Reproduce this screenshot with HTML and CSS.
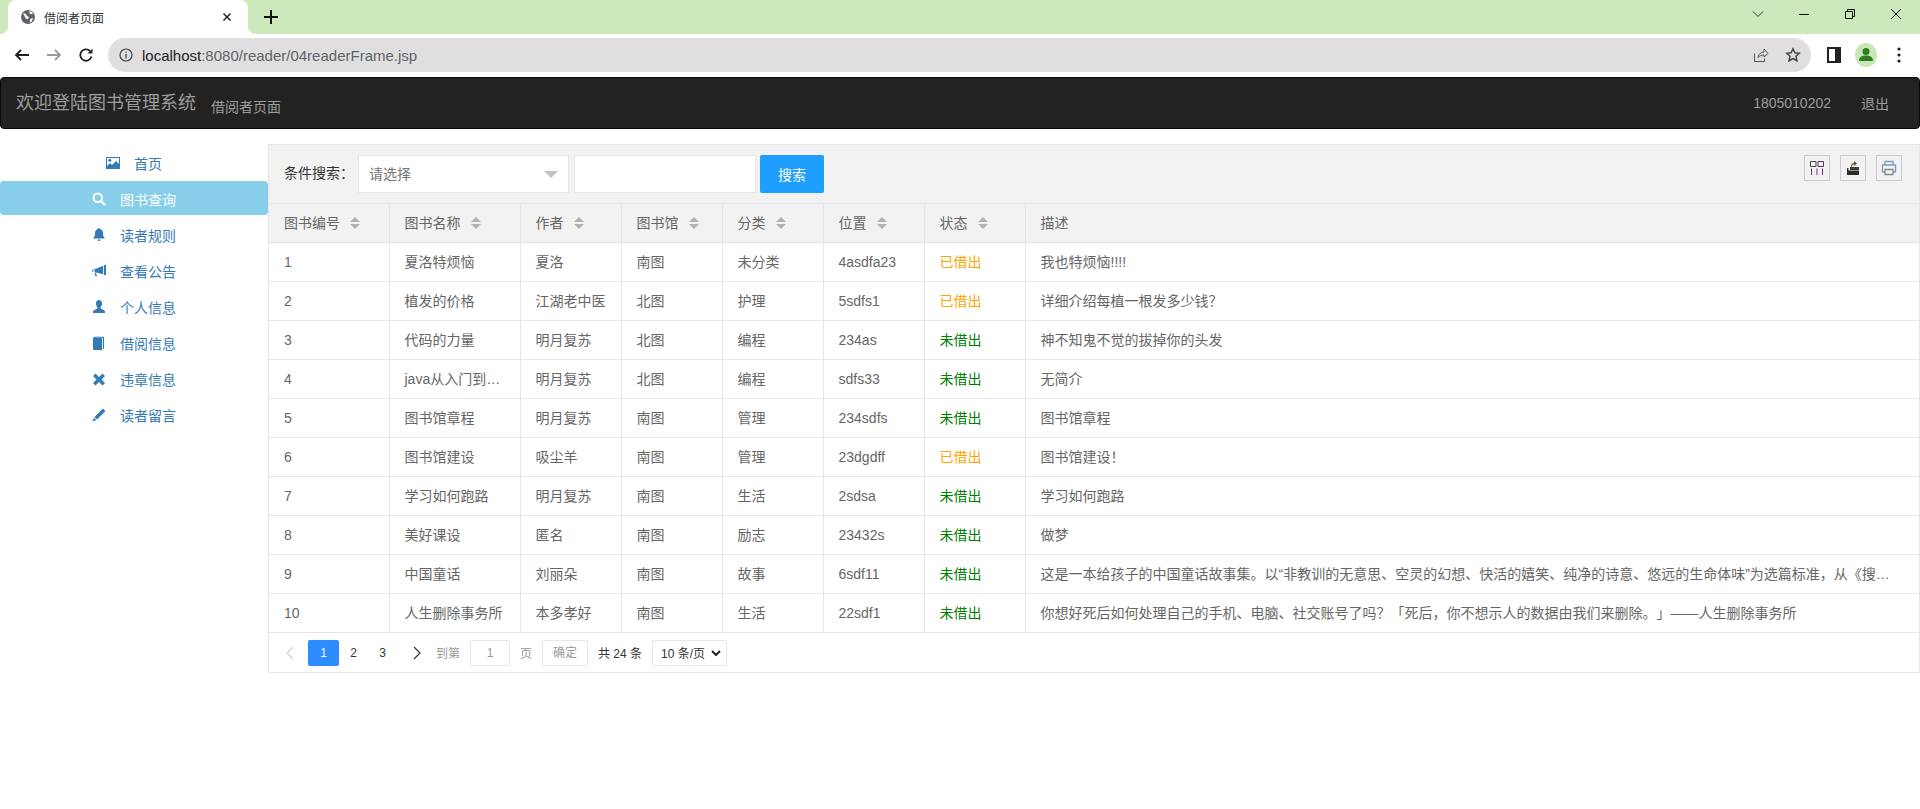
FILE: index.html
```html
<!DOCTYPE html>
<html lang="zh">
<head>
<meta charset="utf-8">
<title>借阅者页面</title>
<link rel="stylesheet" href="styles.css">
</head>
<body>
<div class="tabstrip">
  <div class="tab">
    <svg class="favicon" viewBox="0 0 16 16"><circle cx="8" cy="8" r="7" fill="#5f6368"/><path d="M3 4l3 1 1 2 2 1-1 2-2 0-1-2zM9 2l3 1 1 2-3 0zM10 10l3-1-1 3-2 2z" fill="#fff"/></svg>
    <span class="tab-title">借阅者页面</span>
    <svg class="tab-close" viewBox="0 0 10 10"><path d="M1.500 1.500l7 7M8.500 1.500l-7 7" stroke="#222" stroke-width="1.500"/></svg>
  </div>
  <svg class="newtab" viewBox="0 0 12 12"><path d="M6 0v12M0 6h12" stroke="#111" stroke-width="1.700"/></svg>
  <div class="winctl">
    <svg viewBox="0 0 12 12"><path d="M1 3.500l5 5 5-5" fill="none" stroke="#333"/></svg>
    <svg viewBox="0 0 12 12"><path d="M1 6.500h10" stroke="#111"/></svg>
    <svg viewBox="0 0 12 12"><path d="M1.500 3.500h7v7h-7zM3.500 3.500v-2h7v7h-2" fill="none" stroke="#111"/></svg>
    <svg viewBox="0 0 12 12"><path d="M1 1l10 10M11 1L1 11" stroke="#111"/></svg>
  </div>
</div>
<div class="toolbar">
  <svg class="tb-ico" viewBox="0 0 16 16"><path d="M15 8H2M7 3L2 8l5 5" fill="none" stroke="#222" stroke-width="1.800"/></svg>
  <svg class="tb-ico" viewBox="0 0 16 16"><path d="M1 8h13M9 3l5 5-5 5" fill="none" stroke="#9a9a9a" stroke-width="1.800"/></svg>
  <svg class="tb-ico" viewBox="0 0 16 16"><path d="M13.500 9.500A5.700 5.700 0 1 1 12 4" fill="none" stroke="#222" stroke-width="1.800"/><path d="M14.500 1.500v5h-5z" fill="#222"/></svg>
  <div class="omnibox">
    <svg class="info" viewBox="0 0 14 14"><circle cx="7" cy="7" r="6" fill="none" stroke="#444" stroke-width="1.200"/><path d="M7 6v4.500M7 3.500v1.300" stroke="#444" stroke-width="1.300"/></svg>
    <span class="url"><b>localhost</b>:8080/reader/04readerFrame.jsp</span>
    <svg class="omni-ico" viewBox="0 0 16 16"><path d="M1.500 6.500v8h10v-3M5 10.500C5.500 7 8 5 11 5V2l4 4.500L11 10V8C8.500 8 6.500 9 5 10.500z" fill="none" stroke="#555" stroke-width="1"/></svg>
    <svg class="omni-ico" viewBox="0 0 16 16"><path d="M8 1.800l1.900 4 4.300.5-3.200 3 .9 4.400L8 11.500l-3.900 2.200.9-4.400-3.200-3 4.300-.5z" fill="none" stroke="#444" stroke-width="1.500"/></svg>
  </div>
  <div class="tb-right">
    <svg class="panel" viewBox="0 0 14 16"><path d="M0 0h14v16H0z" fill="#222"/><path d="M2 2h6v12H2z" fill="#fff"/></svg>
    <span class="avatar"><svg viewBox="0 0 22 24"><circle cx="11" cy="8.500" r="3.500" fill="#2f7d1f"/><path d="M4 18c0-4 3-5.500 7-5.500s7 1.500 7 5.500z" fill="#2f7d1f"/></svg></span>
    <svg class="menu" viewBox="0 0 4 16"><circle cx="2" cy="2" r="1.600" fill="#222"/><circle cx="2" cy="8" r="1.600" fill="#222"/><circle cx="2" cy="14" r="1.600" fill="#222"/></svg>
  </div>
</div>
<nav class="navbar">
  <span class="brand">欢迎登陆图书管理系统</span>
  <span class="subtitle">借阅者页面</span>
  <span class="nav-user">1805010202</span>
  <span class="nav-exit">退出</span>
</nav>
<div class="main">
  <ul class="side">
    <li class="side-first"><svg viewBox="0 0 14 14"><path fill-rule="evenodd" d="M0 1h14v12H0zM1 2v8l3-3 2 2 4-4 3 3V2z"/><circle cx="3.800" cy="4.300" r="1.500"/></svg><span>首页</span></li>
    <li class="active"><svg viewBox="0 0 14 14"><circle cx="5.800" cy="5.800" r="4.300" fill="none" stroke="currentColor" stroke-width="2"/><path d="M9 9l4 4" stroke="currentColor" stroke-width="2.400"/></svg><span>图书查询</span></li>
    <li><svg viewBox="0 0 14 14"><path d="M7 0a1 1 0 0 1 1 1c2.500.5 3 2.500 3 4.500 0 3 1 4 2.200 5H.8C2 9.500 3 8.500 3 5.500 3 3.500 3.500 1.500 6 1a1 1 0 0 1 1-1zM5.500 11.500h3a1.500 1.500 0 0 1-3 0z"/></svg><span>读者规则</span></li>
    <li><svg viewBox="0 0 14 14"><path d="M12 1h2v10h-2zM11.200 1.800v8.400L4 8.500H2.500v-3.700H4zM1.300 5.300v2.600H.4V5.300zM4 9l1 3.200H3.400L2.700 9z"/></svg><span>查看公告</span></li>
    <li><svg viewBox="0 0 14 14"><path d="M7 0c2 0 3 1.500 3 3.500 0 1.700-.7 3-1.500 4 0 1 .5 1.200 2 2 1.500.7 2.500 1 2.500 2.300V13H1v-1.200c0-1.300 1-1.600 2.500-2.300 1.500-.8 2-1 2-2-.8-1-1.500-2.300-1.500-4C4 1.500 5 0 7 0z"/></svg><span>个人信息</span></li>
    <li><svg viewBox="0 0 14 14"><path d="M1 2.500C1 1.500 1.800.8 3 .8h9v12H11V1.800H3.500v.3H10.200v12H2.500c-1 0-1.500-.6-1.500-1.500z"/></svg><span>借阅信息</span></li>
    <li><svg viewBox="0 0 14 14"><path d="M3.500 1.500L7 5l3.500-3.500 2.500 2.500L9.500 7.500l3.500 3.500-2.500 2.500L7 10l-3.500 3.500L1 11l3.500-3.500L1 4z"/></svg><span>违章信息</span></li>
    <li><svg viewBox="0 0 14 14"><path d="M11 .5l2.500 2.500-8.500 8.500-2.500-2.500zM2 9.800l2.300 2.300L.5 13.500z"/></svg><span>读者留言</span></li>
  </ul>
  <section class="panel-box">
    <div class="search">
      <label class="search-label">条件搜索：</label>
      <div class="fake-select">请选择<i class="caret"></i></div>
      <input class="search-input" type="text">
      <button class="search-btn">搜索</button>
      <div class="tools">
        <span class="tool"><svg viewBox="0 0 16 16"><path d="M1.500 1.500h5.500v5h-5.500zM9 1.500h5.500v5H9z" fill="none" stroke="#4d3a4f"/><path d="M2.500 8.500v6.500M8 8.500v6.500M13.500 8.500v6.500" stroke="#7a2a88" stroke-width="1"/></svg></span>
        <span class="tool"><svg viewBox="0 0 16 16"><path d="M2 8h1.500v2.500H14V15H2z" fill="#2a2a2a"/><path d="M5 7h9v3H5z" fill="#3a3a3a"/><path d="M9 1l3 2.500-3 2.500z" fill="#2f4f6f"/><path d="M6.500 7c0-2 1-3.500 3-3.500" fill="none" stroke="#b5651d" stroke-width="1.300"/></svg></span>
        <span class="tool"><svg viewBox="0 0 16 16"><path d="M4 5V1.500h8V5M4 12H1.500V5h13v7H12" fill="none" stroke="#7f9cc4" stroke-width="1.300"/><path d="M4 9.500h8v5H4z" fill="none" stroke="#888" stroke-width="1.300"/></svg></span>
      </div>
    </div>
    <table class="grid">
      <colgroup><col class="c1"><col class="c2"><col class="c3"><col class="c3"><col class="c3"><col class="c3"><col class="c3"><col></colgroup>
      <thead>
        <tr>
          <th><span class="th">图书编号<i class="sort"></i></span></th>
          <th><span class="th">图书名称<i class="sort"></i></span></th>
          <th><span class="th">作者<i class="sort"></i></span></th>
          <th><span class="th">图书馆<i class="sort"></i></span></th>
          <th><span class="th">分类<i class="sort"></i></span></th>
          <th><span class="th">位置<i class="sort"></i></span></th>
          <th><span class="th">状态<i class="sort"></i></span></th>
          <th>描述</th>
        </tr>
      </thead>
      <tbody>
        <tr><td>1</td><td>夏洛特烦恼</td><td>夏洛</td><td>南图</td><td>未分类</td><td>4asdfa23</td><td class="out">已借出</td><td>我也特烦恼!!!!</td></tr>
        <tr><td>2</td><td>植发的价格</td><td>江湖老中医</td><td>北图</td><td>护理</td><td>5sdfs1</td><td class="out">已借出</td><td>详细介绍每植一根发多少钱？</td></tr>
        <tr><td>3</td><td>代码的力量</td><td>明月复苏</td><td>北图</td><td>编程</td><td>234as</td><td class="in">未借出</td><td>神不知鬼不觉的拔掉你的头发</td></tr>
        <tr><td>4</td><td>java从入门到…</td><td>明月复苏</td><td>北图</td><td>编程</td><td>sdfs33</td><td class="in">未借出</td><td>无简介</td></tr>
        <tr><td>5</td><td>图书馆章程</td><td>明月复苏</td><td>南图</td><td>管理</td><td>234sdfs</td><td class="in">未借出</td><td>图书馆章程</td></tr>
        <tr><td>6</td><td>图书馆建设</td><td>吸尘羊</td><td>南图</td><td>管理</td><td>23dgdff</td><td class="out">已借出</td><td>图书馆建设！</td></tr>
        <tr><td>7</td><td>学习如何跑路</td><td>明月复苏</td><td>南图</td><td>生活</td><td>2sdsa</td><td class="in">未借出</td><td>学习如何跑路</td></tr>
        <tr><td>8</td><td>美好课设</td><td>匿名</td><td>南图</td><td>励志</td><td>23432s</td><td class="in">未借出</td><td>做梦</td></tr>
        <tr><td>9</td><td>中国童话</td><td>刘丽朵</td><td>南图</td><td>故事</td><td>6sdf11</td><td class="in">未借出</td><td>这是一本给孩子的中国童话故事集。以“非教训的无意思、空灵的幻想、快活的嬉笑、纯净的诗意、悠远的生命体味”为选篇标准，从《搜…</td></tr>
        <tr><td>10</td><td>人生删除事务所</td><td>本多孝好</td><td>南图</td><td>生活</td><td>22sdf1</td><td class="in">未借出</td><td>你想好死后如何处理自己的手机、电脑、社交账号了吗？「死后，你不想示人的数据由我们来删除。」——人生删除事务所</td></tr>
      </tbody>
    </table>
    <div class="pager">
      <svg class="chev prev" viewBox="0 0 8 14"><path d="M7 1L1 7l6 6" fill="none" stroke="#d2d2d2" stroke-width="1.200"/></svg>
      <span class="pg cur">1</span>
      <span class="pg">2</span>
      <span class="pg">3</span>
      <svg class="chev next" viewBox="0 0 8 14"><path d="M1 1l6 6-6 6" fill="none" stroke="#333" stroke-width="1.200"/></svg>
      <span class="muted goto">到第</span>
      <span class="pg-input">1</span>
      <span class="muted page-word">页</span>
      <span class="pg-ok">确定</span>
      <span class="total">共 24 条</span>
      <span class="pg-size">10 条/页<svg viewBox="0 0 10 6"><path d="M1 1l4 4 4-4" fill="none" stroke="#222" stroke-width="2"/></svg></span>
    </div>
  </section>
</div>
</body>
</html>
```
FILE: styles.css
```css
* { box-sizing: border-box; }
html, body { margin: 0; padding: 0; height: 100%; overflow: hidden; }
body { background: #fff; font-family: "Liberation Sans", "Noto Sans CJK SC", sans-serif; font-size: 14px; color: #666; text-spacing-trim: space-all; }

.tabstrip { height: 34px; background: #cce9be; display: flex; align-items: flex-end; }
.tab { width: 240px; height: 34px; margin-left: 8px; background: #fff; border-radius: 8px 8px 0 0; display: flex; align-items: center; padding: 0 14px 0 12px; position: relative; }
.tab::before, .tab::after { content: ""; position: absolute; bottom: 0; width: 8px; height: 8px; }
.tab::before { left: -8px; background: radial-gradient(circle at 0 0, #cce9be 8px, #fff 8.5px); }
.tab::after { right: -8px; background: radial-gradient(circle at 100% 0, #cce9be 8px, #fff 8.5px); }
.favicon { width: 16px; height: 16px; flex: none; }
.tab-title { margin-left: 8px; font-size: 12px; color: #333; flex: 1; }
.tab-close { width: 10px; height: 10px; margin-right: 2px; }
.newtab { width: 14px; height: 14px; margin: 0 0 10px 16px; }
.winctl { margin-left: auto; height: 34px; display: flex; align-items: flex-start; padding: 8px 18px 0 0; gap: 34px; }
.winctl svg { width: 12px; height: 12px; display: block; }

.toolbar { height: 43px; background: #fff; display: flex; align-items: flex-start; padding-top: 4px; }
.tb-ico { width: 16px; height: 16px; flex: none; margin: 9px 0 0 16px; }
.tb-ico:first-child { margin-left: 14px; }
.omnibox { margin-left: 14px; width: 1703px; height: 34px; background: #dfdfdf; border-radius: 17px; display: flex; align-items: center; padding: 0 10px 0 11px; flex: none; }
.info { width: 14px; height: 14px; flex: none; }
.url { margin-left: 9px; font-size: 15px; color: #5f6368; flex: 1; font-family: "Liberation Sans", sans-serif; }
.url b { font-weight: normal; color: #202124; }
.omni-ico { width: 16px; height: 16px; margin-left: 16px; }
.tb-right { flex: 1; display: flex; align-items: center; height: 34px; padding-left: 16px; }
.panel { width: 14px; height: 16px; }
.avatar { width: 22px; height: 24px; background: #c9e7b9; border-radius: 50%; margin-left: 14px; display: block; }
.avatar svg { display: block; width: 22px; height: 24px; }
.menu { width: 4px; height: 16px; margin-left: 20px; }

.navbar { height: 52px; background: #222; border: 1px solid #080808; border-radius: 4px; display: flex; align-items: center; color: #9d9d9d; padding: 0 30px 0 15px; }
.brand { font-size: 18px; line-height: 20px; }
.subtitle { font-size: 14px; margin-left: 15px; position: relative; top: 3px; }
.nav-user { margin-left: auto; }
.nav-exit { margin-left: 30px; }

.main { display: flex; align-items: flex-start; padding-top: 15px; }
.side { list-style: none; margin: 1px 0 0; padding: 0; width: 268px; flex: none; }
.side li { height: 34px; margin-bottom: 2px; padding-top: 1px; display: flex; align-items: center; justify-content: center; gap: 14px; color: #337ab7; border-radius: 4px; }
.side li svg { width: 14px; height: 14px; fill: currentColor; flex: none; }
.side li span { line-height: 20px; padding-top: 2px; }
.side li.active { background: #87ceeb; color: #fff; }

.panel-box { flex: 1; min-width: 0; border: 1px solid #e6e6e6; }
.search { height: 58px; background: #f2f2f2; display: flex; align-items: flex-start; padding: 10px 17px 0 15px; }
.search-label { color: #333; line-height: 36px; width: 74px; flex: none; }
.fake-select { width: 211px; height: 38px; background: #fff; border: 1px solid #e6e6e6; padding-left: 10px; line-height: 36px; color: #757575; position: relative; flex: none; }
.caret { position: absolute; right: 10px; top: 15px; border: 7px solid transparent; border-top-color: #c2c2c2; border-bottom: none; }
.search-input { width: 182px; height: 38px; margin-left: 5px; border: 1px solid #e6e6e6; background: #fff; flex: none; outline: none; }
.search-btn { width: 64px; height: 38px; margin-left: 4px; background: #1e9fff; color: #fff; border: none; border-radius: 2px; font: inherit; padding: 0; flex: none; }
.tools { margin-left: auto; display: flex; gap: 10px; }
.tool { width: 26px; height: 26px; border: 1px solid #ccc; display: flex; align-items: center; justify-content: center; }
.tool svg { width: 16px; height: 16px; display: block; }

.grid { width: 100%; table-layout: fixed; border-collapse: collapse; }
.c1 { width: 120px; }
.c2 { width: 131px; }
.c3 { width: 101px; }
.grid th, .grid td { height: 39px; padding: 0 15px; border: 1px solid #e6e6e6; font-weight: normal; font-size: 14px; line-height: 20px; text-align: left; white-space: nowrap; color: #666; }
.grid tr > :first-child { border-left: none; }
.grid tr > :last-child { border-right: none; }
.grid th { background: #f2f2f2; }
.th { display: inline-flex; align-items: center; }
.sort { width: 10px; height: 12px; margin-left: 10px; position: relative; display: block; flex: none; }
.sort::before, .sort::after { content: ""; position: absolute; left: 0; border: 5px solid transparent; }
.sort::before { top: 0; border-top: none; border-bottom-color: #b2b2b2; }
.sort::after { bottom: 0; border-bottom: none; border-top-color: #b2b2b2; }
.grid td.out { color: #ffa500; }
.grid td.in { color: #008000; }

.pager { height: 39px; display: flex; align-items: center; padding-left: 14px; font-size: 12px; color: #333; }
.chev { width: 8px; height: 14px; flex: none; }
.prev { margin: 0 14px 0 3px; }
.pg { width: 29px; height: 26px; line-height: 26px; text-align: center; border-radius: 2px; }
.pg.cur { width: 31px; background: #2d8cff; color: #fff; }
.next { margin-left: 16px; }
.muted { color: #999; }
.goto { margin-left: 15px; }
.pg-input { width: 40px; height: 26px; line-height: 24px; border: 1px solid #e6e6e6; border-radius: 2px; text-align: center; color: #999; margin-left: 10px; }
.page-word { margin-left: 10px; }
.pg-ok { width: 46px; height: 26px; line-height: 24px; border: 1px solid #e6e6e6; border-radius: 2px; text-align: center; color: #999; margin-left: 10px; }
.total { margin-left: 10px; }
.pg-size { width: 75px; height: 26px; border: 1px solid #e6e6e6; border-radius: 2px; margin-left: 10px; padding: 0 5px 0 8px; display: flex; align-items: center; justify-content: space-between; }
.pg-size svg { width: 10px; height: 6px; }
```
